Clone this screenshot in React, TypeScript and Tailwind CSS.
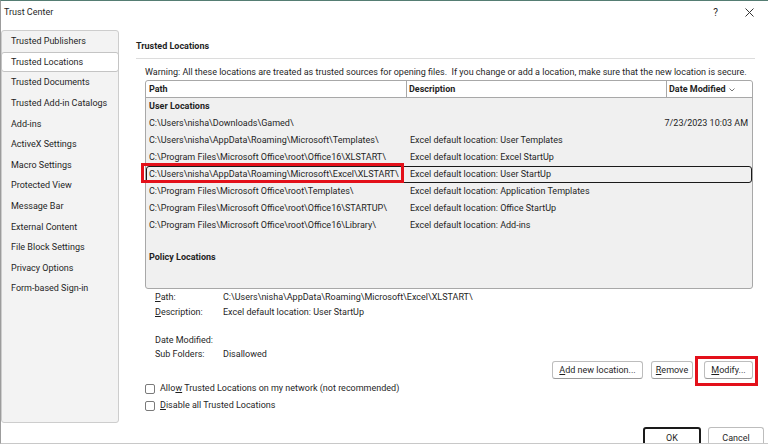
import React from "react";

const rows: { path: string; desc: string; date?: string; selected?: boolean }[] = [
  { path: "C:\\Users\\nisha\\Downloads\\Gamed\\", desc: "", date: "7/23/2023 10:03 AM" },
  { path: "C:\\Users\\nisha\\AppData\\Roaming\\Microsoft\\Templates\\", desc: "Excel default location: User Templates" },
  { path: "C:\\Program Files\\Microsoft Office\\root\\Office16\\XLSTART\\", desc: "Excel default location: Excel StartUp" },
  { path: "C:\\Users\\nisha\\AppData\\Roaming\\Microsoft\\Excel\\XLSTART\\", desc: "Excel default location: User StartUp", selected: true },
  { path: "C:\\Program Files\\Microsoft Office\\root\\Templates\\", desc: "Excel default location: Application Templates" },
  { path: "C:\\Program Files\\Microsoft Office\\root\\Office16\\STARTUP\\", desc: "Excel default location: Office StartUp" },
  { path: "C:\\Program Files\\Microsoft Office\\root\\Office16\\Library\\", desc: "Excel default location: Add-ins" },
];

const nav = [
  "Trusted Publishers",
  "Trusted Locations",
  "Trusted Documents",
  "Trusted Add-in Catalogs",
  "Add-ins",
  "ActiveX Settings",
  "Macro Settings",
  "Protected View",
  "Message Bar",
  "External Content",
  "File Block Settings",
  "Privacy Options",
  "Form-based Sign-in",
];

function Btn({ children, w, def }: { children: React.ReactNode; w: string; def?: boolean }) {
  return (
    <div
      className={`${w} flex items-center justify-center bg-white rounded-[3px] ${
        def ? "border-2 border-[#1a1a1a]" : "border border-[#bdbdbd] border-b-[#9a9a9a]"
      }`}
    >
      {children}
    </div>
  );
}

export default function App() {
  return (
    <div className="w-[768px] h-[444px] bg-white border-t border-t-[#557d73] border-l border-l-[#9c9c9c] border-b border-b-[#c8c8c8] overflow-hidden flex flex-col font-['Roboto',sans-serif] text-[9px] text-[#1f1f1f] leading-none">
      {/* title bar */}
      <div className="h-[23px] flex items-center pl-[3px] shrink-0">
        <span>Trust Center</span>
        <span className="ml-auto text-[10px] mr-[27px]">?</span>
        <svg width="9" height="9" viewBox="0 0 9 9" className="mr-[14px]">
          <path d="M0.5 0.5 L8.5 8.5 M8.5 0.5 L0.5 8.5" stroke="#333" strokeWidth="1" />
        </svg>
      </div>

      {/* body */}
      <div className="flex h-[399px] shrink-0">
        {/* sidebar */}
        <div className="mt-[6px] w-[118px] h-[393px] bg-[#f3f3f3] border border-[#cdcdcd] rounded-[3px] flex flex-col shrink-0">
          {nav.map((n, i) =>
            i === 1 ? (
              <div
                key={n}
                className="h-[20px] -mx-[1px] my-[0.5px] flex items-center pl-[9px] bg-white border border-[#c4c4c4] rounded-[3px]"
              >
                {n}
              </div>
            ) : (
              <div key={n} className="h-[20.6px] flex items-center pl-[9px]">
                {n}
              </div>
            )
          )}
        </div>

        {/* content */}
        <div className="ml-[17px] w-[619px] pt-[16px] flex flex-col">
          <div className="h-[12px] flex items-center font-bold">Trusted Locations</div>
          <div className="mt-[6px] border-t border-[#dcdcdc]" />
          <div className="ml-[9px] mt-[7px] h-[12px] flex items-center whitespace-nowrap">
            Warning: All these locations are treated as trusted sources for opening files.&nbsp; If you change or add a location, make sure that the new location is secure.
          </div>

          {/* table */}
          <div className="relative ml-[9px] mt-[2px] w-[608px] h-[209px] border border-[#a8a8a8] rounded-[3px] bg-[#f0f0f0] flex flex-col">
            <div className="h-[17px] bg-white border-b border-[#a8a8a8] flex rounded-t-[3px] shrink-0">
              <div className="w-[261px] flex items-center pl-[3px] font-bold border-r border-[#a8a8a8]">Path</div>
              <div className="w-[260px] flex items-center pl-[2px] font-bold border-r border-[#a8a8a8]">Description</div>
              <div className="flex-1 flex items-center pl-[2px] font-bold">
                Date Modified
                <svg width="6" height="4" viewBox="0 0 6 4" className="ml-[3px] mt-[1px]">
                  <path d="M0.5 0.5 L3 3 L5.5 0.5" stroke="#666" strokeWidth="0.9" fill="none" />
                </svg>
              </div>
            </div>
            <div className="h-[17px] flex items-center pl-[3px] font-bold">User Locations</div>
            {rows.map((r) => (
              <div key={r.path} className="relative h-[17px] flex items-center">
                {r.selected && (
                  <div className="absolute left-[0px] right-[0px] top-[0px] bottom-[0px] border border-[#1a1a1a] rounded-[3px]" />
                )}
                <div className="w-[262px] pl-[3px] whitespace-nowrap">{r.path}</div>
                <div className="w-[260px] pl-[2px] whitespace-nowrap">{r.desc}</div>
                <div className="flex-1 pr-[4px] text-right whitespace-nowrap">{r.date}</div>
              </div>
            ))}
            <div className="h-[15px]" />
            <div className="h-[17px] flex items-center pl-[3px] font-bold">Policy Locations</div>

            {/* red annotation */}
            <div className="absolute left-[-5px] top-[82px] w-[263px] h-[20px] border-[3px] border-[#e3101a]" />
          </div>

          {/* details */}
          <div className="ml-[19px] mt-[1px] flex flex-col">
            <div className="h-[15px] flex items-center">
              <span className="w-[68px]">
                <span className="underline">P</span>ath:
              </span>
              <span>C:\Users\nisha\AppData\Roaming\Microsoft\Excel\XLSTART\</span>
            </div>
            <div className="h-[15px] flex items-center">
              <span className="w-[68px]">
                <span className="underline">D</span>escription:
              </span>
              <span>Excel default location: User StartUp</span>
            </div>
            <div className="h-[13px]" />
            <div className="h-[14px] flex items-center">
              <span className="w-[68px]">Date Modified:</span>
            </div>
            <div className="h-[14px] flex items-center">
              <span className="w-[68px]">Sub Folders:</span>
              <span>Disallowed</span>
            </div>
          </div>

          {/* buttons */}
          <div className="mt-[0px] h-[18px] flex justify-end pr-[2px]">
            <Btn w="w-[91px]">
              <span className="underline">A</span>dd new location...
            </Btn>
            <div className="w-[8px]" />
            <Btn w="w-[42px]">
              <span className="underline">R</span>emove
            </Btn>
            <div className="w-[11px]" />
            <div className="relative flex">
              <Btn w="w-[49px]">
                <span className="underline">M</span>odify...
              </Btn>
              <div className="absolute left-[-9px] top-[-5px] right-[-5px] bottom-[-7px] border-[3px] border-[#e3101a]" />
            </div>
          </div>

          {/* checkboxes */}
          <div className="ml-[9px] mt-[1px] flex flex-col">
            <div className="h-[17px] flex items-center">
              <div className="w-[10px] h-[10px] border border-[#7a7a7a] rounded-[2px] bg-white mr-[5px]" />
              <span>
                Allo<span className="underline">w</span> Trusted Locations on my network (not recommended)
              </span>
            </div>
            <div className="h-[17px] flex items-center">
              <div className="w-[10px] h-[10px] border border-[#7a7a7a] rounded-[2px] bg-white mr-[5px]" />
              <span>
                <span className="underline">D</span>isable all Trusted Locations
              </span>
            </div>
          </div>
        </div>
      </div>

      {/* footer */}
      <div className="mt-[4px] h-[22px] flex justify-end pr-[4px] shrink-0">
        <Btn w="w-[58px]" def>
          OK
        </Btn>
        <div className="w-[7px]" />
        <Btn w="w-[56px]">Cancel</Btn>
      </div>
    </div>
  );
}
